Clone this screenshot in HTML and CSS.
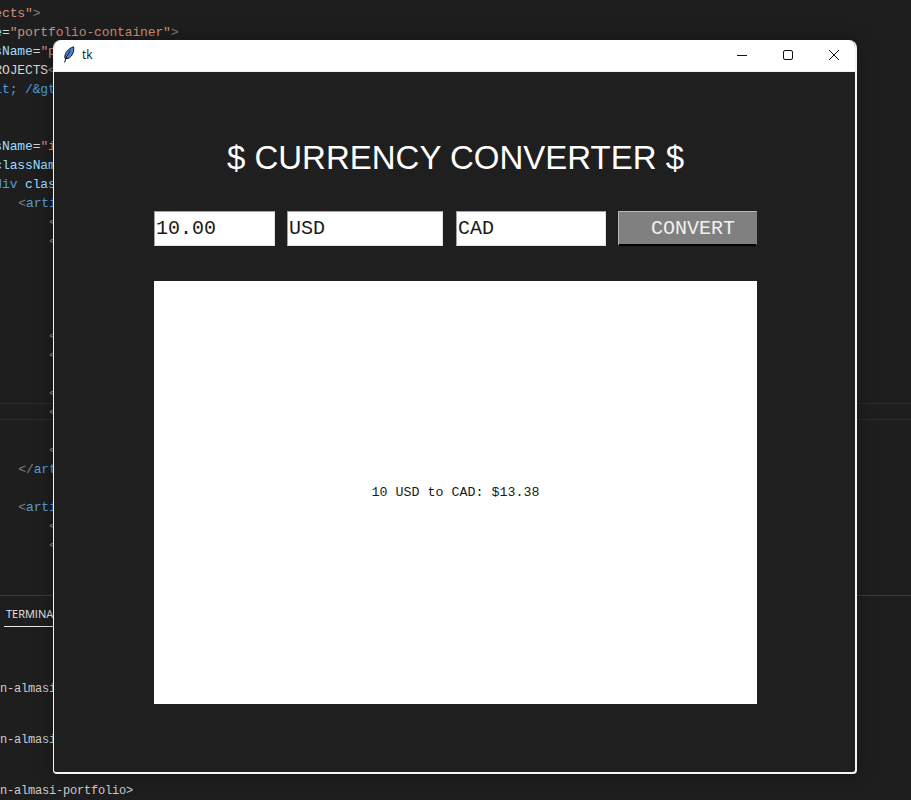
FILE: index.html
```html
<!DOCTYPE html>
<html lang="en">
<head>
    <meta charset="UTF-8">
    <meta name="viewport" content="width=device-width, initial-scale=1.0">
    <title>tk</title>
    <link rel="stylesheet" href="styles.css">
</head>
<body>
    <!-- Editor behind the window -->
    <div class="editor">
        <div class="code">
            <div class="line"><span class="str">ects"</span><span class="tag">&gt;</span></div>
            <div class="line"><span class="attr">e</span><span class="plain">=</span><span class="str">"portfolio-container"</span><span class="tag">&gt;</span></div>
            <div class="line"><span class="attr">sName</span><span class="plain">=</span><span class="str">"p</span></div>
            <div class="line"><span class="plain">ROJECTS</span><span class="tag">&lt;</span></div>
            <div class="line"><span class="kw">lt; /&amp;gt</span></div>
            <div class="line"></div>
            <div class="line"></div>
            <div class="line"><span class="attr">sName</span><span class="plain">=</span><span class="str">"i</span></div>
            <div class="line"><span class="attr">classNam</span></div>
            <div class="line"><span class="kw">div </span><span class="attr">clas</span></div>
            <div class="line indent-1"><span class="tag">&lt;</span><span class="kw">arti</span></div>
            <div class="line indent-2"><span class="tag">&lt;</span></div>
            <div class="line indent-2"><span class="tag">&lt;</span></div>
            <div class="line"></div>
            <div class="line"></div>
            <div class="line"></div>
            <div class="line"></div>
            <div class="line indent-2"><span class="tag">&lt;</span></div>
            <div class="line indent-2"><span class="tag">&lt;</span></div>
            <div class="line"></div>
            <div class="line indent-2"><span class="tag">&lt;</span></div>
            <div class="line indent-2 current-line"><span class="tag">&lt;</span></div>
            <div class="line"></div>
            <div class="line indent-2"><span class="tag">&lt;</span></div>
            <div class="line indent-1"><span class="tag">&lt;/</span><span class="kw">art</span></div>
            <div class="line"></div>
            <div class="line indent-1"><span class="tag">&lt;</span><span class="kw">arti</span></div>
            <div class="line indent-2"><span class="tag">&lt;</span></div>
            <div class="line indent-2"><span class="tag">&lt;</span></div>
        </div>
        <div class="terminal">
            <div class="terminal-tabs"><span class="terminal-tab">TERMINAL</span></div>
            <div class="terminal-lines">
                <div class="term-line">n-almasi</div>
                <div class="term-line">n-almasi</div>
                <div class="term-line">n-almasi-portfolio&gt;</div>
            </div>
        </div>
    </div>

    <!-- Tk window -->
    <div class="window">
        <div class="titlebar">
            <svg class="feather" width="12" height="17" viewBox="0 0 12 17">
                <path d="M2 12.5 C1 8.5 4 3 10.5 0.8 C11.5 5 9.5 10.5 5 12.5 Z" fill="#4a86d8" stroke="#10141c" stroke-width="1"/>
                <path d="M1.5 16.5 L3.5 11 L7.5 4.5" stroke="#10141c" stroke-width="1" fill="none"/>
            </svg>
            <span class="window-title">tk</span>
            <div class="window-controls">
                <span class="control">
                    <svg width="12" height="12" viewBox="0 0 12 12"><path d="M1 6.5H11" stroke="#111" stroke-width="1" fill="none"/></svg>
                </span>
                <span class="control">
                    <svg width="12" height="12" viewBox="0 0 12 12"><rect x="1.5" y="1.5" width="9" height="9" rx="1.5" stroke="#111" stroke-width="1" fill="none"/></svg>
                </span>
                <span class="control">
                    <svg width="12" height="12" viewBox="0 0 12 12"><path d="M1 1L11 11M11 1L1 11" stroke="#111" stroke-width="1" fill="none"/></svg>
                </span>
            </div>
        </div>
        <div class="client">
            <h1>$ CURRENCY CONVERTER $</h1>
            <div class="form-row">
                <input class="entry entry-amount" type="text" value="10.00">
                <input class="entry entry-from" type="text" value="USD">
                <input class="entry entry-to" type="text" value="CAD">
                <button class="convert-btn">CONVERT</button>
            </div>
            <div class="result">10 USD to CAD: $13.38</div>
        </div>
    </div>
</body>
</html>
```
FILE: styles.css
```css
/* General Styles */
html, body {
    height: 100%;
}

body {
    margin: 0;
    background-color: #1e1e1e;
    overflow: hidden;
    position: relative;
}

/* Editor behind the window */
.editor {
    height: 800px;
    display: flex;
    flex-direction: column;
    font-family: 'Liberation Mono', monospace;
    font-size: 13px;
    color: #cccccc;
}

.code {
    height: 596px;
    padding-top: 4px;
    box-sizing: border-box;
    border-bottom: 1px solid #3a3a3a;
    overflow: hidden;
}

.line {
    height: 19px;
    line-height: 19px;
    white-space: pre;
    margin-left: -5.67px;
    letter-spacing: -0.13px;
}

.indent-1 {
    padding-left: 24px;
}

.indent-2 {
    padding-left: 54.67px;
}

.current-line {
    background-image: linear-gradient(#2c2c2c 1px, transparent 1px, transparent 16px, #2c2c2c 16px, #2c2c2c 17px, transparent 17px);
}

.str { color: #ce9178; }
.tag { color: #808080; }
.attr { color: #9cdcfe; }
.plain { color: #d4d4d4; }
.kw { color: #569cd6; }

.terminal {
    flex: 1;
    overflow: hidden;
}

.terminal-tabs {
    height: 31px;
    box-sizing: border-box;
    padding: 10px 0 0 4px;
}

.terminal-tab {
    display: block;
    width: 60px;
    height: 21px;
    box-sizing: border-box;
    padding-left: 2px;
    border-bottom: 1px solid #e7e7e7;
    font-family: 'Open Sans', sans-serif;
    font-size: 11px;
    line-height: 16px;
    color: #e7e7e7;
}

.terminal-lines {
    padding-top: 52px;
}

.term-line {
    height: 51px;
    line-height: 20px;
    font-size: 12px;
    letter-spacing: -0.2px;
}

/* Tk window */
.window {
    position: absolute;
    left: 53px;
    top: 40px;
    width: 804px;
    height: 734px;
    box-sizing: border-box;
    border: solid #f4f4f4;
    border-width: 0 2px 2px 1px;
    border-radius: 8px 8px 4px 4px;
    background-color: #1f1f1f;
    box-shadow: 0 0 18px rgba(0, 0, 0, 0.35);
    display: flex;
    flex-direction: column;
    overflow: hidden;
}

.titlebar {
    height: 32px;
    box-sizing: border-box;
    background-color: #ffffff;
    border-bottom: 1px solid #f0f0f0;
    display: flex;
    align-items: center;
    padding: 0 0 2px 9px;
    flex-shrink: 0;
}

.window-title {
    margin-left: 7px;
    font-family: 'Open Sans', sans-serif;
    font-size: 12px;
    color: #111111;
}

.window-controls {
    margin-left: auto;
    margin-right: -2px;
    display: flex;
}

.control {
    width: 46px;
    height: 29px;
    display: flex;
    align-items: center;
    justify-content: center;
}

.client {
    flex: 1;
    padding: 0 98px 68px 100px;
    display: flex;
    flex-direction: column;
}

h1 {
    margin: 64px 0 0;
    height: 44px;
    line-height: 44px;
    text-align: center;
    font-family: 'Liberation Sans', Arial, sans-serif;
    font-size: 33px;
    font-weight: 400;
    color: #ffffff;
}

.form-row {
    margin-top: 31px;
    display: flex;
    height: 35px;
}

.entry {
    height: 35px;
    box-sizing: border-box;
    margin: 0;
    padding: 0 1px;
    border: 1px solid;
    border-color: #a0a0a0 #e3e3e3 #e3e3e3 #a0a0a0;
    border-radius: 0;
    outline: none;
    background-color: #ffffff;
    font-family: 'Liberation Mono', monospace;
    font-size: 20px;
    color: #1a1a1a;
}

.entry-amount {
    width: 121px;
    margin-right: 12px;
}

.entry-from {
    width: 156px;
    margin-right: 13px;
}

.entry-to {
    width: 150px;
    margin-right: 12px;
}

.convert-btn {
    width: 139px;
    height: 35px;
    box-sizing: border-box;
    padding: 0 0 0 11px;
    border: solid;
    border-width: 1px 1px 2px 1px;
    border-color: #b8b8b8 #808080 #000000 #b8b8b8;
    border-radius: 0;
    background-color: #808080;
    font-family: 'Liberation Mono', monospace;
    font-size: 20px;
    color: #f0f0f0;
    cursor: pointer;
}

.result {
    margin-top: 35px;
    flex: 1;
    background-color: #ffffff;
    display: flex;
    align-items: center;
    justify-content: center;
    font-family: 'Liberation Mono', monospace;
    font-size: 13.33px;
    color: #1a1a1a;
}
```
